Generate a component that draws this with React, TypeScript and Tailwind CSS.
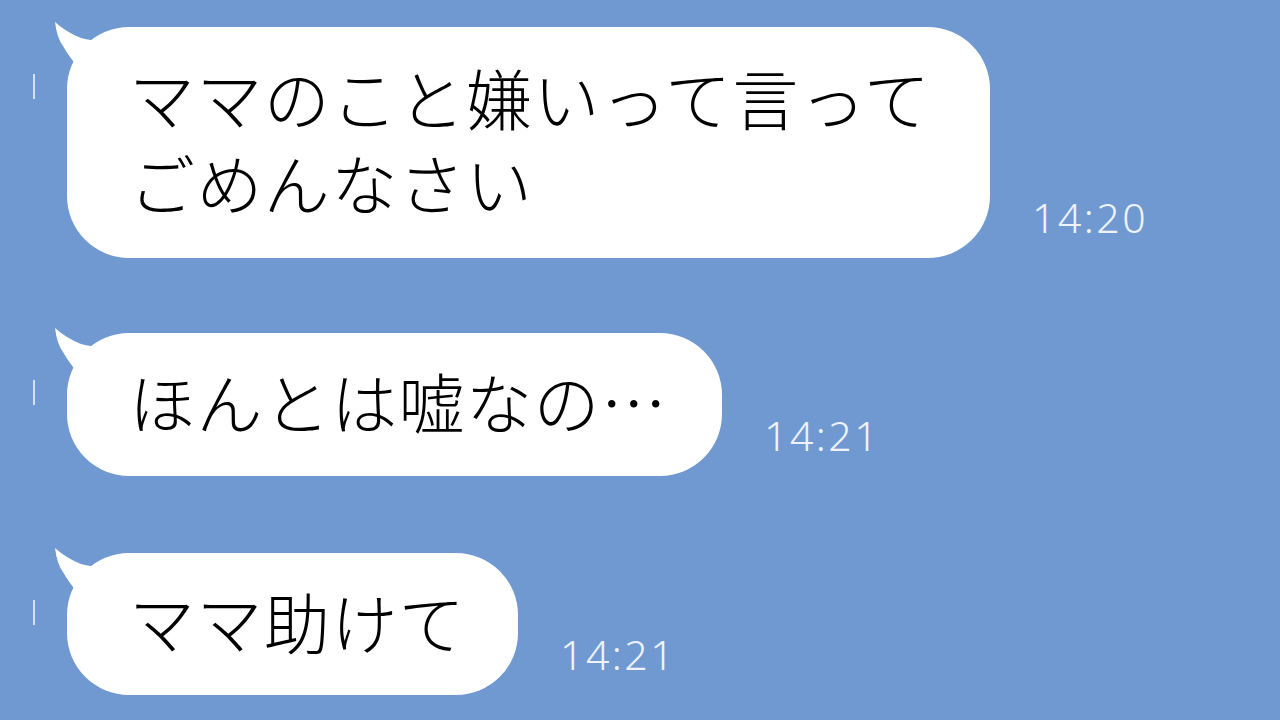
import React from "react";

const Tail = () => (
  <svg
    className="absolute left-[-14px] top-[-7px]"
    width="52"
    height="52"
    viewBox="0 0 52 52"
  >
    <path
      d="M2 2 Q4 18 10 26 Q15 35 24 46 L52 46 L52 21 Q38 21 28 18 Q13 12 2 2 Z"
      fill="#ffffff"
    />
  </svg>
);

type Msg = { lines: string[]; time: string; w: string; h: string };

const Row = ({ lines, time, w, h }: Msg) => (
  <div className="flex items-end">
    <div className="w-[2px] h-[25px] bg-white/70 ml-[33px] mr-[32px] self-start mt-[47px]" />
    <div
      className={`relative bg-white rounded-[62px] pl-[62px] pb-[8px] flex flex-col justify-center ${w} ${h}`}
    >
      <Tail />
      {lines.map((l, i) => (
        <div
          key={i}
          className="text-[66px] leading-[85px] text-black whitespace-nowrap font-light tracking-[1.4px]"
          style={{ fontFamily: '"Noto Sans CJK JP", "Noto Sans", sans-serif' }}
        >
          {l}
        </div>
      ))}
    </div>
    <div
      className="ml-[42px] mb-[22px] text-[41px] leading-[38px] text-[#eef3fb] font-light tracking-[2.5px]"
      style={{ fontFamily: '"Noto Sans", "Liberation Sans", sans-serif' }}
    >
      {time}
    </div>
  </div>
);

export default function App() {
  return (
    <div className="w-[1280px] h-[720px] bg-[#7099d2] overflow-hidden pt-[27px] flex flex-col gap-[75px]">
      <Row
        lines={["ママのこと嫌いって言って", "ごめんなさい"]}
        time="14:20"
        w="w-[923px]"
        h="h-[231px]"
      />
      <Row lines={["ほんとは嘘なの…"]} time="14:21" w="w-[655px]" h="h-[143px]" />
      <div className="mt-[2px]">
        <Row lines={["ママ助けて"]} time="14:21" w="w-[451px]" h="h-[142px]" />
      </div>
    </div>
  );
}
